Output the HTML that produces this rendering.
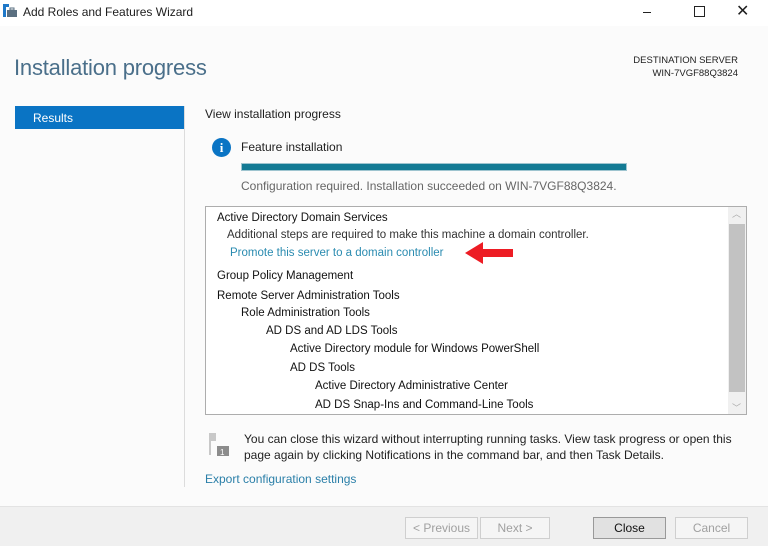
<!DOCTYPE html>
<html><head><style>
*{margin:0;padding:0;box-sizing:border-box}
body{width:768px;height:556px;overflow:hidden;background:#fff;font-family:"Liberation Sans",sans-serif;font-size:12px;color:#1e1e1e;position:relative}
.a{position:absolute;white-space:nowrap}
.main{position:absolute;left:0;top:26px;width:768px;height:480px;background:#fbfbfb}
.foot{position:absolute;left:0;top:506px;width:768px;height:40px;background:#f0f0f0;border-top:1px solid #e3e3e3}
.btn{position:absolute;top:517px;height:22px;border:1px solid #cfcfcf;background:#f5f5f5;color:#a0a0a0;text-align:center;line-height:20px;font-size:12px}
.li{position:absolute;white-space:nowrap;font-size:11.5px;color:#111}
</style></head><body>
<div class="main"></div>
<svg class="a" style="left:3px;top:4px" width="14" height="14"><rect x="0" y="0" width="3" height="13" fill="#1e78c8"/><rect x="3" y="0" width="3" height="3" fill="#1e78c8"/><rect x="4" y="6" width="10" height="7" fill="#5a6f80"/><rect x="7" y="4" width="4" height="2" fill="none" stroke="#5a6f80"/></svg>
<div class="a" style="left:23px;top:5px;font-size:12px">Add Roles and Features Wizard</div>
<div class="a" style="left:643px;top:12px;width:8px;height:1px;background:#222"></div>
<div class="a" style="left:694px;top:6px;width:11px;height:11px;border:1px solid #222"></div>
<div class="a" style="left:736px;top:1px;font-size:16px">✕</div>
<div class="a" style="left:14px;top:55px;font-size:22px;color:#4a6f8a;font-weight:300;letter-spacing:-0.2px">Installation progress</div>
<div class="a" style="right:30px;top:54px;font-size:9.5px;text-align:right;line-height:13px">DESTINATION SERVER<br>WIN-7VGF88Q3824</div>
<div class="a" style="left:15px;top:106px;width:169px;height:23px;background:#0a74c4;color:#fff;padding:5px 0 0 18px">Results</div>
<div class="a" style="left:184px;top:106px;width:1px;height:381px;background:#dcdcdc"></div>
<div class="a" style="left:205px;top:107px">View installation progress</div>
<div class="a" style="left:212px;top:138px;width:19px;height:19px;border-radius:50%;background:#0a74c4;color:#fff;font-weight:bold;font-size:13px;text-align:center;line-height:19px;font-family:'Liberation Serif',serif">i</div>
<div class="a" style="left:241px;top:140px">Feature installation</div>
<div class="a" style="left:241px;top:163px;width:386px;height:8px;background:#137a94;border:1px solid #9ec4cf"></div>
<div class="a" style="left:241px;top:179px;color:#666">Configuration required. Installation succeeded on WIN-7VGF88Q3824.</div>
<div class="a" style="left:205px;top:206px;width:542px;height:209px;background:#fff;border:1px solid #adadad"></div>
<div class="a" style="left:728px;top:207px;width:18px;height:207px;background:#f0f0f0"></div>
<div class="a" style="left:729px;top:224px;width:16px;height:168px;background:#c2c2c2"></div>
<div class="a" style="left:732px;top:207px;font-size:9px;color:#aaa">︿</div>
<div class="a" style="left:732px;top:401px;font-size:9px;color:#aaa">﹀</div>
<div class="li" style="left:217px;top:212px">Active Directory Domain Services</div>
<div class="li" style="left:227px;top:229px;color:#333">Additional steps are required to make this machine a domain controller.</div>
<div class="li" style="left:230px;top:247px;color:#2a8bb0">Promote this server to a domain controller</div>
<svg class="a" style="left:463px;top:240px" width="52" height="26"><polygon points="2,13 20,2 20,9 50,9 50,17 20,17 20,24" fill="#ed1c24"/></svg>
<div class="li" style="left:217px;top:270px">Group Policy Management</div>
<div class="li" style="left:217px;top:290px">Remote Server Administration Tools</div>
<div class="li" style="left:241px;top:307px">Role Administration Tools</div>
<div class="li" style="left:266px;top:325px">AD DS and AD LDS Tools</div>
<div class="li" style="left:290px;top:343px">Active Directory module for Windows PowerShell</div>
<div class="li" style="left:290px;top:362px">AD DS Tools</div>
<div class="li" style="left:315px;top:380px">Active Directory Administrative Center</div>
<div class="li" style="left:315px;top:399px">AD DS Snap-Ins and Command-Line Tools</div>
<svg class="a" style="left:207px;top:431px" width="24" height="26"><polygon points="2,2 9,2 9,10 4,10 4,24 2,24" fill="#c8c8c8"/><rect x="10" y="15" width="12" height="10" fill="#8c8c8c"/><text x="13" y="24" font-size="8" fill="#fff" font-family="Liberation Sans">1</text></svg>
<div class="a" style="left:244px;top:431px;line-height:16px;color:#222">You can close this wizard without interrupting running tasks. View task progress or open this<br>page again by clicking Notifications in the command bar, and then Task Details.</div>
<div class="a" style="left:205px;top:472px;color:#2a7fa8">Export configuration settings</div>
<div class="foot"></div>
<div class="btn" style="left:405px;width:73px">&lt; Previous</div>
<div class="btn" style="left:480px;width:70px">Next &gt;</div>
<div class="btn" style="left:593px;width:73px;background:#e1e1e1;border-color:#999;color:#111">Close</div>
<div class="btn" style="left:675px;width:73px">Cancel</div>
</body></html>
